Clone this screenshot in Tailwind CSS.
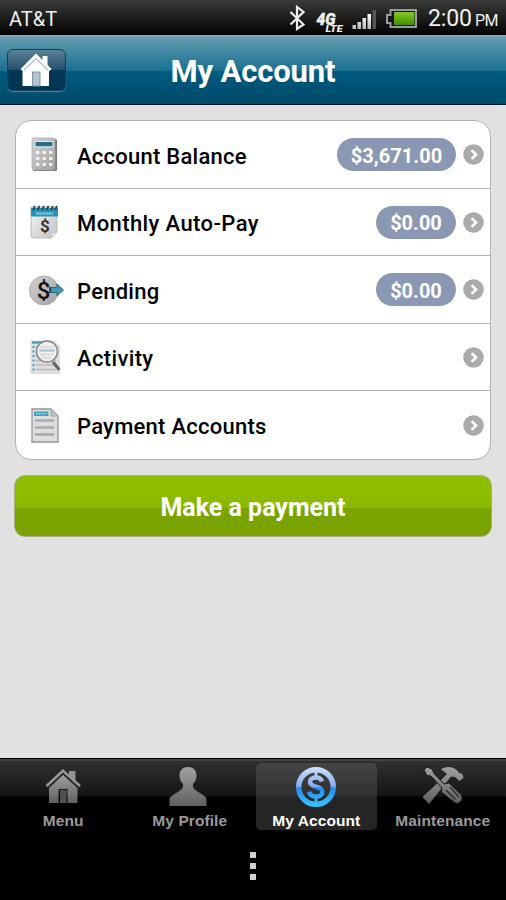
<!DOCTYPE html>
<html lang="en">
<head>
<meta charset="utf-8">
<title>My Account</title>
<script src="https://cdn.jsdelivr.net/npm/@tailwindcss/browser@4"></script>
</head>
<body class="bg-[#e1e1e1] font-['Roboto',sans-serif]">
<svg class="absolute size-0" aria-hidden="true">
  <defs>
    <linearGradient id="gray" x1="0" y1="0" x2="0" y2="1"><stop offset="0" stop-color="#a0a0a0"/><stop offset="1" stop-color="#606060"/></linearGradient>
    <linearGradient id="paper" x1="0" y1="0" x2="1" y2="1"><stop offset="0" stop-color="#f4f4f4"/><stop offset="1" stop-color="#c2c2c2"/></linearGradient>
    <linearGradient id="metal" x1="0" y1="0" x2="1" y2="1"><stop offset="0" stop-color="#d4d4d4"/><stop offset="1" stop-color="#a0a0a0"/></linearGradient>
    <linearGradient id="bars" x1="0" y1="0" x2="0" y2="1"><stop offset="0" stop-color="#fff"/><stop offset="1" stop-color="#bbb"/></linearGradient>
    <linearGradient id="batt" x1="0" y1="0" x2="0" y2="1"><stop offset="0" stop-color="#86c72c"/><stop offset=".5" stop-color="#63ad10"/><stop offset="1" stop-color="#458f00"/></linearGradient>
    <linearGradient id="coin" gradientUnits="userSpaceOnUse" x1="0" y1="0" x2="0" y2="40"><stop offset="0" stop-color="#d3e0fa"/><stop offset=".48" stop-color="#83aef0"/><stop offset=".53" stop-color="#258af5"/><stop offset="1" stop-color="#35c8ff"/></linearGradient>
    <symbol id="chev" viewBox="0 0 22 22"><circle cx="11" cy="11" r="10.8" fill="#aaa"/><path d="M9 6.400l4.600 4.600L9 15.600" fill="none" stroke="#fff" stroke-width="2.800"/></symbol>
  </defs>
</svg>
<div class="flex h-[900px] w-[506px] flex-col overflow-hidden">
  <header class="flex h-[35px] shrink-0 items-center bg-linear-to-b from-[#3b3b39] to-[#050505] pl-[9px] text-[#f0f0f0]">
    <span class="mt-[3px] w-[279px] text-[20px] leading-[35px]">AT&amp;T</span>
    <svg class="h-[35px] w-[132px]" viewBox="288 0 132 35">
      <path d="M290.500 12l13 12.500-6.500 4.500V7l6.500 5-13 12.500" fill="none" stroke="#eee" stroke-width="2.200"/>
      <text x="316.500" y="24.500" font-family="Roboto" font-weight="900" font-style="italic" font-size="16.500" textLength="19" lengthAdjust="spacingAndGlyphs" fill="#f0f0f0" stroke="#f0f0f0" stroke-width=".4">4G</text>
      <text x="325.500" y="32" font-family="Roboto" font-weight="900" font-style="italic" font-size="9" textLength="17" lengthAdjust="spacingAndGlyphs" fill="#f0f0f0">LTE</text>
      <path d="M352.500 25h3.500v4h-3.500zM357.500 22h3.500v7h-3.500zM362.500 18h3.500v11h-3.500zM367.500 14h3.500v15h-3.500z" fill="url(#bars)"/>
      <path d="M372.500 10h3.500v19h-3.500z" fill="#555"/>
      <path d="M390.500 10H416v17h-25.500v-4h-3.500v-8h3.500z" fill="#161616" stroke="#9b9b9b" stroke-width="2"/>
      <path d="M394 12h20.500v13H394z" fill="url(#batt)"/>
    </svg>
    <span class="mt-[2px] ml-[8px] text-[23px] leading-[35px] tracking-[-0.100px]">2:00</span>
    <span class="mt-[6px] ml-[3px] text-[16px] leading-[35px] tracking-[-0.600px]">PM</span>
  </header>

  <div class="relative flex h-[70px] shrink-0 items-center border-t-2 border-b-[1.500px] border-t-[#7cabbe] border-b-[#011622] bg-[linear-gradient(180deg,#619bb1_0%,#1b7090_50%,#005c80_51%,#005274_75%,#004c69_100%)] px-[7px] pb-[2px]">
    <div class="flex h-[42px] w-[59px] items-center justify-center rounded-[6px] border border-[#173f57] bg-[linear-gradient(180deg,#5b8298_0%,#214e69_50%,#023957_51%,#013553_100%)] shadow-[0_1px_1px_#4b8ba4]">
      <svg class="mt-[1px] mr-[1px] h-[34px] w-[32px]" viewBox="0 0 32 34">
        <path d="M2.500 16V33h26.500V16L16 4z" fill="#fff"/>
        <path d="M22.500 3h5v11l-5-5z" fill="#fff"/>
        <path d="M1.500 17L16 2.700 30.500 17" fill="none" stroke="#fff" stroke-width="3"/>
        <path d="M4 17L16 5.500 28 17" fill="none" stroke="#a9bdca" stroke-width="1.200"/>
        <path d="M12.500 33V19h7.500v14z" fill="#b4c4ce" stroke="#7d95a6" stroke-width="1"/>
      </svg>
    </div>
    <h1 class="absolute inset-x-0 top-[16px] text-center text-[31px] leading-[38px] font-bold tracking-[-0.150px] text-white">My Account</h1>
  </div>

  <main class="flex-1 px-[15px] pt-[16px]">
    <ul class="-mt-[1px] h-[340px] divide-y-[1.500px] divide-[#b4b4b4] overflow-hidden rounded-[16px] border-[1.500px] border-[#b1b1b1] bg-white text-[22px] font-medium text-black">
      <li class="flex h-[67.500px] items-center pt-[1px] pr-[6px] pl-[10px]">
        <svg class="h-[40px] w-[38px]" viewBox="26 135 38 40">
          <rect x="33" y="139" width="24" height="32" rx="1.500" fill="#777"/><rect x="32" y="138" width="23" height="32" rx="1.500" fill="url(#metal)" stroke="#aaa" stroke-width=".7"/>
          <rect x="34.500" y="141" width="19" height="6.500" rx="2" fill="#dfeaf0"/><rect x="35.500" y="142" width="17" height="4.300" rx="1" fill="#226d8e"/>
          <g fill="#f4f4f4"><rect x="36" y="151" width="3.500" height="3" rx="1"/><rect x="42.500" y="151" width="3.500" height="3" rx="1"/><rect x="49" y="151" width="3.500" height="3" rx="1"/><rect x="36" y="157" width="3.500" height="3" rx="1"/><rect x="42.500" y="157" width="3.500" height="3" rx="1"/><rect x="49" y="157" width="3.500" height="3" rx="1"/><rect x="36" y="163" width="3.500" height="3" rx="1"/><rect x="42.500" y="163" width="3.500" height="3" rx="1"/><rect x="49" y="163" width="3.500" height="3" rx="1"/></g>
        </svg>
        <span class="mt-[3px] ml-[13px] flex-1 tracking-[0.250px]">Account Balance</span>
        <span class="flex h-[33px] w-[119px] items-center justify-center rounded-full bg-[#8b98b3] pt-[2px] text-[20px] font-bold tracking-[0.050px] text-white">$3,671.00</span>
        <svg class="ml-[7px] size-[21px]"><use href="#chev"/></svg>
      </li>
      <li class="flex h-[67.500px] items-center pt-[1px] pr-[6px] pl-[10px]">
        <svg class="h-[40px] w-[38px]" viewBox="26 202 38 40">
          <path d="M31 207h26v25l-6 6H33q-2 0-2-2z" fill="url(#paper)" stroke="#bcbcbc"/>
          <path d="M51 238v-5l6-1z" fill="#eee" stroke="#aaa" stroke-width=".6"/>
          <path d="M31 208h27v8.500H31z" fill="#2792b8"/><path d="M36 213.500h17" stroke="#80c5dc" stroke-width="2.500" stroke-dasharray="2.500 .6"/>
          <path d="M33 210l2-4M37.500 210l2-4M42 210l2-4M46.500 210l2-4M51 210l2-4M55 210l2-4" stroke="#30424a" stroke-width="1.800"/>
          <text x="45" y="232" text-anchor="middle" font-family="Roboto" font-size="17" font-weight="700" fill="#333">$</text>
        </svg>
        <span class="mt-[2px] ml-[13px] flex-1 tracking-[0.400px]">Monthly Auto-Pay</span>
        <span class="flex h-[33px] w-[80px] items-center justify-center rounded-full bg-[#8b98b3] pt-[1px] text-[20px] font-bold tracking-[0px] text-white">$0.00</span>
        <svg class="ml-[7px] size-[21px]"><use href="#chev"/></svg>
      </li>
      <li class="flex h-[67.500px] items-center pt-[1px] pr-[6px] pl-[10px]">
        <svg class="h-[40px] w-[38px]" viewBox="26 270 38 40">
          <circle cx="44" cy="290.500" r="14.500" fill="url(#metal)" stroke="#aaa"/>
          <text x="43.500" y="299" text-anchor="middle" font-family="Roboto" font-size="24" font-weight="500" fill="#151515">$</text>
          <path d="M51 287.500h6v-3.500l6.500 6-6.500 6v-3.500h-6z" fill="#4199ba" stroke="#276880"/>
          <path d="M50 287v6" stroke="#265465" stroke-width="2"/>
        </svg>
        <span class="mt-[3px] ml-[13px] flex-1 tracking-[0.250px]">Pending</span>
        <span class="flex h-[33px] w-[80px] items-center justify-center rounded-full bg-[#8b98b3] pt-[2px] text-[20px] font-bold tracking-[0px] text-white">$0.00</span>
        <svg class="ml-[7px] size-[21px]"><use href="#chev"/></svg>
      </li>
      <li class="flex h-[67.500px] items-center pt-[1px] pr-[6px] pl-[10px]">
        <svg class="h-[40px] w-[38px]" viewBox="26 337 38 40">
          <path d="M30.500 340.500h24l5.500 6V374H30.500z" fill="#dedede"/>
          <path d="M32 342.500h14" stroke="#3a91ad" stroke-width="2"/>
          <path d="M36 347h20M36 351.500h20M36 356h20M36 360.500h20M36 365h20M36 369.500h20" stroke="#bcbcbc" stroke-width="1.600"/>
          <path d="M33.500 346v26" stroke="#50a9ca" stroke-width="2.200" stroke-dasharray="2 2.500"/>
          <path d="M53 362l6.500 8" stroke="#666" stroke-width="3"/>
          <circle cx="47" cy="351.500" r="10.500" fill="#efefef" stroke="#868686" stroke-width="1.500"/>
          <path d="M39.500 347h14M40 354.500h14M42 358h9" stroke="#d6d6d6" stroke-width="1.400"/>
          <path d="M39.500 350.500h15" stroke="#9bcbdc" stroke-width="3" stroke-dasharray="2 .6"/>
        </svg>
        <span class="mt-[2px] ml-[13px] flex-1 tracking-[0.350px]">Activity</span>
        <svg class="ml-[7px] size-[21px]"><use href="#chev"/></svg>
      </li>
      <li class="flex h-[67.500px] items-center pt-[1px] pr-[6px] pl-[10px]">
        <svg class="h-[40px] w-[38px]" viewBox="26 405 38 40">
          <path d="M32 409h19l7 7v26H32z" fill="#dedede" stroke="#949494" stroke-width="1.300"/>
          <path d="M51 409v7h7z" fill="#c2c2c2" stroke="#999" stroke-width=".8"/>
          <path d="M34 411.500h14.500v4.500H34z" fill="#3fa2bd"/><path d="M36 413.700h11" stroke="#8dccdc" stroke-width="1.500" stroke-dasharray="2 .6"/>
          <path d="M38 420.500h16M38 427.500h16M38 434.500h16" stroke="#b1b1b1" stroke-width="3"/>
          <path d="M35 420.500h3M35 427.500h3M35 434.500h3" stroke="#9a9a9a" stroke-width="2"/>
        </svg>
        <span class="mt-[2px] ml-[13px] flex-1 tracking-[0.250px]">Payment Accounts</span>
        <svg class="ml-[7px] size-[21px]"><use href="#chev"/></svg>
      </li>
    </ul>
    <button class="-mx-[1px] mt-[15px] flex h-[62px] w-[478px] items-center justify-center rounded-[11px] border border-[#a3ad8c] bg-[linear-gradient(180deg,#90c000_0%,#8bb800_53%,#7ba400_54%,#7aa200_100%)] pt-[3px] text-[25px] font-bold text-white">Make a payment</button>
  </main>

  <footer class="flex h-[142px] shrink-0 flex-col border-t border-black bg-black">
    <nav class="grid h-[79px] grid-cols-4 border-t-2 border-[#434343] bg-[linear-gradient(180deg,#303030_0px,#151515_35px,#000_36px)] pt-[2px] font-['Liberation_Sans',sans-serif] text-[15.500px] font-bold tracking-[0.080px] text-[#9a9a9a]">
      <div class="flex flex-col items-center">
        <svg class="h-[48px] w-[44px]" viewBox="0 -5 44 48">
          <path d="M8 18L22 6l14.500 12v17H26.500V21H17.500v14H8z" fill="url(#gray)"/>
          <path d="M28 3h6.500v13L28 10z" fill="#929292"/>
          <path d="M5.500 20L22 4.500 39 20" fill="none" stroke="#252525" stroke-width="3.500"/>
          <path d="M5.500 18L22 2.800 39 18" fill="none" stroke="#969696" stroke-width="2.500"/>
          <path d="M19 35V22h6.500v13z" fill="#505050"/>
        </svg>
        <span class="mt-[1px] leading-[18px]">Menu</span>
      </div>
      <div class="flex flex-col items-center">
        <svg class="mr-[3px] h-[48px] w-[44px]" viewBox="0 0 44 48">
          <path d="M22 4c5.200 0 8.500 3.200 8.500 8.500 0 4-1.500 6.500-3.500 8.500-.6 3.500 1 5.500 4 7.200l6 3.800c2.500 1.500 3.500 3 3.500 5v6H3.500v-6c0-2 1-3.500 3.500-5l6-3.800c3-1.700 4.600-3.700 4-7.200-2-2-3.500-4.500-3.500-8.500C13.500 7.200 16.800 4 22 4z" fill="url(#gray)"/>
        </svg>
        <span class="mt-[1px] leading-[18px]">My Profile</span>
      </div>
      <div class="mr-[3px] ml-[3px] flex h-[67px] flex-col items-center rounded-[5px] bg-[linear-gradient(180deg,#444_0px,#303030_33px,#252525_34px,#252525_100%)] text-white">
        <svg class="mt-[3px] h-[43px] w-[44px]" viewBox="-2 -1 44 43">
          <circle cx="20" cy="20" r="17.300" fill="none" stroke="url(#coin)" stroke-width="5.400"/>
          <path d="M26 14.500c-.8-2.700-3-4-6-4-3.700 0-6 1.800-6 4.300 0 2.900 2.500 4 6 4.900s6.300 2.200 6.300 5.200c0 2.900-2.600 4.700-6.300 4.700-3.900 0-6.300-1.900-6.800-4.900" fill="none" stroke="url(#coin)" stroke-width="4.500"/>
          <path d="M18.500 5h3v6h-3zM18.500 29h3v6h-3z" fill="url(#coin)"/>
        </svg>
        <span class="mt-[3px] leading-[18px]">My Account</span>
      </div>
      <div class="flex flex-col items-center">
        <svg class="h-[48px] w-[44px]" viewBox="0 -1 44 48">
          <path d="M1.500 33L22 14l4-4-6-5q8-4 14.500 0l4 4 3 1 1 4-4 3-4.500-4-4-.5L8 40z" fill="url(#gray)"/>
          <path d="M3 6l3-3 5 2 2 4.500 10 10.500 5-1L40.500 31q2 4-1.500 7-3.500 3-6 0L20.500 28l.5-4L10 12 6 11.500z" fill="url(#gray)" stroke="#191919" stroke-width="1"/>
          <path d="M25 26l9.500 9.500M29 23l9 10" stroke="#303030" stroke-width="1.500"/>
        </svg>
        <span class="mt-[1px] leading-[18px]">Maintenance</span>
      </div>
    </nav>
    <div class="flex h-[62px] flex-col items-center gap-[5px] pt-[14px]">
      <i class="size-[6px] bg-[#d2d0ca]"></i><i class="size-[6px] bg-[#d2d0ca]"></i><i class="size-[6px] bg-[#d2d0ca]"></i>
    </div>
  </footer>
</div>
</body>
</html>
